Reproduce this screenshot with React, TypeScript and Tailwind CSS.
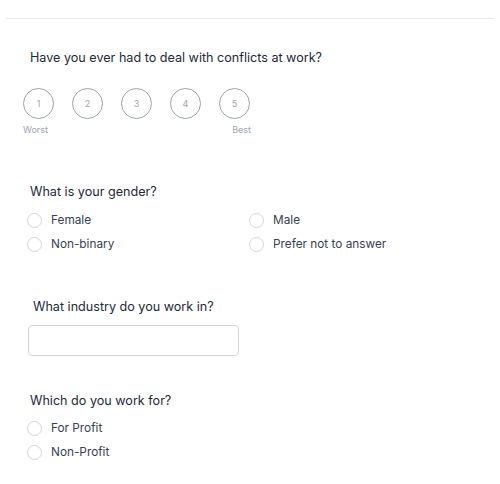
import React from "react";

function Radio({ label }: { label: string }) {
  return (
    <label className="flex items-center h-5">
      <span className="w-[15px] h-[15px] rounded-full border border-[#d1d5db] bg-white shrink-0" />
      <span className="ml-[9px] text-[11.8px] leading-5 text-[#374151]">{label}</span>
    </label>
  );
}

export default function App() {
  return (
    <div
      className="w-[500px] h-[484px] bg-white overflow-hidden"
      style={{ fontFamily: "Inter, 'Noto Sans', sans-serif" }}
    >
      <div className="pt-[18px] px-[6px]">
        <div className="h-px bg-[#e5e7eb]" />
      </div>

      <div className="pl-[30px] pt-[29px]">
        <h2 className="text-[12.6px] leading-5 text-[#1e293b] font-normal">
          Have you ever had to deal with conflicts at work?
        </h2>
      </div>

      <div className="pl-[23px] pt-[20px]">
        <div className="flex gap-[18px]">
          {[1, 2, 3, 4, 5].map((n) => (
            <div
              key={n}
              className="w-[31px] h-[31px] rounded-full border border-[#9ca3af] flex items-center justify-center text-[9px] text-[#9ca3af]"
            >
              {n}
            </div>
          ))}
        </div>
        <div className="flex justify-between w-[228px] pt-[4px] text-[9px] leading-[14px] text-[#9ca3af]">
          <span>Worst</span>
          <span>Best</span>
        </div>
      </div>

      <div className="pl-[30px] pt-[45px]">
        <h2 className="text-[12.6px] leading-5 text-[#1e293b]">What is your gender?</h2>
      </div>
      <div className="pl-[27px] pt-[8px] grid grid-cols-[222px_1fr] gap-y-[4px]">
        <Radio label="Female" />
        <Radio label="Male" />
        <Radio label="Non-binary" />
        <Radio label="Prefer not to answer" />
      </div>

      <div className="pl-[33px] pt-[43px]">
        <h2 className="text-[12.6px] leading-5 text-[#1e293b]">What industry do you work in?</h2>
      </div>
      <div className="pl-[28px] pt-[8px]">
        <input
          type="text"
          className="block w-[211px] h-[31px] rounded-[4px] border border-[#d1d5db] bg-white outline-none"
        />
      </div>

      <div className="pl-[30px] pt-[35px]">
        <h2 className="text-[12.6px] leading-5 text-[#1e293b]">Which do you work for?</h2>
      </div>
      <div className="pl-[27px] pt-[7px] flex flex-col gap-[4px]">
        <Radio label="For Profit" />
        <Radio label="Non-Profit" />
      </div>
    </div>
  );
}
